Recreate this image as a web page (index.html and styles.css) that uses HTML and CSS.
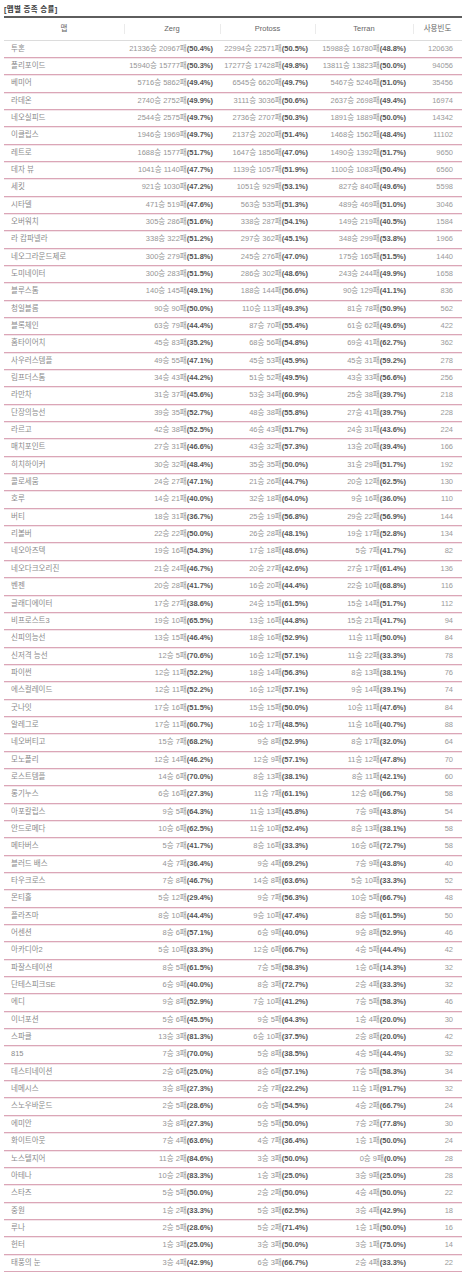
FILE: index.html
```html
<!DOCTYPE html>
<html lang="ko">
<head>
<meta charset="utf-8">
<title>맵별 종족 승률</title>
<link rel="stylesheet" href="styles.css">
</head>
<body>
<div class="wrap">
<div class="title">[맵별 종족 승률]</div>
<table class="stats">
<colgroup><col class="c-map"><col class="c-z"><col class="c-p"><col class="c-t"><col class="c-f"></colgroup>
<thead>
<tr><th>맵</th><th>Zerg</th><th>Protoss</th><th>Terran</th><th>사용빈도</th></tr>
</thead>
<tbody>
<tr><td class="map">투혼</td><td>21336승 20967패<b>(50.4%)</b></td><td>22994승 22571패<b>(50.5%)</b></td><td>15988승 16780패<b>(48.8%)</b></td><td class="f">120636</td></tr>
<tr><td class="map">폴리포이드</td><td>15940승 15777패<b>(50.3%)</b></td><td>17277승 17428패<b>(49.8%)</b></td><td>13811승 13823패<b>(50.0%)</b></td><td class="f">94056</td></tr>
<tr><td class="map">베미어</td><td>5716승 5862패<b>(49.4%)</b></td><td>6545승 6620패<b>(49.7%)</b></td><td>5467승 5246패<b>(51.0%)</b></td><td class="f">35456</td></tr>
<tr><td class="map">라데온</td><td>2740승 2752패<b>(49.9%)</b></td><td>3111승 3036패<b>(50.6%)</b></td><td>2637승 2698패<b>(49.4%)</b></td><td class="f">16974</td></tr>
<tr><td class="map">네오실피드</td><td>2544승 2575패<b>(49.7%)</b></td><td>2736승 2707패<b>(50.3%)</b></td><td>1891승 1889패<b>(50.0%)</b></td><td class="f">14342</td></tr>
<tr><td class="map">이클립스</td><td>1946승 1969패<b>(49.7%)</b></td><td>2137승 2020패<b>(51.4%)</b></td><td>1468승 1562패<b>(48.4%)</b></td><td class="f">11102</td></tr>
<tr><td class="map">레트로</td><td>1688승 1577패<b>(51.7%)</b></td><td>1647승 1856패<b>(47.0%)</b></td><td>1490승 1392패<b>(51.7%)</b></td><td class="f">9650</td></tr>
<tr><td class="map">데자 뷰</td><td>1041승 1140패<b>(47.7%)</b></td><td>1139승 1057패<b>(51.9%)</b></td><td>1100승 1083패<b>(50.4%)</b></td><td class="f">6560</td></tr>
<tr><td class="map">세킷</td><td>921승 1030패<b>(47.2%)</b></td><td>1051승 929패<b>(53.1%)</b></td><td>827승 840패<b>(49.6%)</b></td><td class="f">5598</td></tr>
<tr><td class="map">시타델</td><td>471승 519패<b>(47.6%)</b></td><td>563승 535패<b>(51.3%)</b></td><td>489승 469패<b>(51.0%)</b></td><td class="f">3046</td></tr>
<tr><td class="map">오버워치</td><td>305승 286패<b>(51.6%)</b></td><td>338승 287패<b>(54.1%)</b></td><td>149승 219패<b>(40.5%)</b></td><td class="f">1584</td></tr>
<tr><td class="map">라 캄파넬라</td><td>338승 322패<b>(51.2%)</b></td><td>297승 362패<b>(45.1%)</b></td><td>348승 299패<b>(53.8%)</b></td><td class="f">1966</td></tr>
<tr><td class="map">네오그라운드제로</td><td>300승 279패<b>(51.8%)</b></td><td>245승 276패<b>(47.0%)</b></td><td>175승 165패<b>(51.5%)</b></td><td class="f">1440</td></tr>
<tr><td class="map">도미네이터</td><td>300승 283패<b>(51.5%)</b></td><td>286승 302패<b>(48.6%)</b></td><td>243승 244패<b>(49.9%)</b></td><td class="f">1658</td></tr>
<tr><td class="map">블루스톰</td><td>140승 145패<b>(49.1%)</b></td><td>188승 144패<b>(56.6%)</b></td><td>90승 129패<b>(41.1%)</b></td><td class="f">836</td></tr>
<tr><td class="map">청일블롬</td><td>90승 90패<b>(50.0%)</b></td><td>110승 113패<b>(49.3%)</b></td><td>81승 78패<b>(50.9%)</b></td><td class="f">562</td></tr>
<tr><td class="map">블록체인</td><td>63승 79패<b>(44.4%)</b></td><td>87승 70패<b>(55.4%)</b></td><td>61승 62패<b>(49.6%)</b></td><td class="f">422</td></tr>
<tr><td class="map">홈타이어치</td><td>45승 83패<b>(35.2%)</b></td><td>68승 56패<b>(54.8%)</b></td><td>69승 41패<b>(62.7%)</b></td><td class="f">362</td></tr>
<tr><td class="map">사우러스템플</td><td>49승 55패<b>(47.1%)</b></td><td>45승 53패<b>(45.9%)</b></td><td>45승 31패<b>(59.2%)</b></td><td class="f">278</td></tr>
<tr><td class="map">림프더스톰</td><td>34승 43패<b>(44.2%)</b></td><td>51승 52패<b>(49.5%)</b></td><td>43승 33패<b>(56.6%)</b></td><td class="f">256</td></tr>
<tr><td class="map">라만차</td><td>31승 37패<b>(45.6%)</b></td><td>53승 34패<b>(60.9%)</b></td><td>25승 38패<b>(39.7%)</b></td><td class="f">218</td></tr>
<tr><td class="map">단장의능선</td><td>39승 35패<b>(52.7%)</b></td><td>48승 38패<b>(55.8%)</b></td><td>27승 41패<b>(39.7%)</b></td><td class="f">228</td></tr>
<tr><td class="map">라르고</td><td>42승 38패<b>(52.5%)</b></td><td>46승 43패<b>(51.7%)</b></td><td>24승 31패<b>(43.6%)</b></td><td class="f">224</td></tr>
<tr><td class="map">매치포인트</td><td>27승 31패<b>(46.6%)</b></td><td>43승 32패<b>(57.3%)</b></td><td>13승 20패<b>(39.4%)</b></td><td class="f">166</td></tr>
<tr><td class="map">히치하이커</td><td>30승 32패<b>(48.4%)</b></td><td>35승 35패<b>(50.0%)</b></td><td>31승 29패<b>(51.7%)</b></td><td class="f">192</td></tr>
<tr><td class="map">콜로세움</td><td>24승 27패<b>(47.1%)</b></td><td>21승 26패<b>(44.7%)</b></td><td>20승 12패<b>(62.5%)</b></td><td class="f">130</td></tr>
<tr><td class="map">호루</td><td>14승 21패<b>(40.0%)</b></td><td>32승 18패<b>(64.0%)</b></td><td>9승 16패<b>(36.0%)</b></td><td class="f">110</td></tr>
<tr><td class="map">버티</td><td>18승 31패<b>(36.7%)</b></td><td>25승 19패<b>(56.8%)</b></td><td>29승 22패<b>(56.9%)</b></td><td class="f">144</td></tr>
<tr><td class="map">리볼버</td><td>22승 22패<b>(50.0%)</b></td><td>26승 28패<b>(48.1%)</b></td><td>19승 17패<b>(52.8%)</b></td><td class="f">134</td></tr>
<tr><td class="map">네오아즈텍</td><td>19승 16패<b>(54.3%)</b></td><td>17승 18패<b>(48.6%)</b></td><td>5승 7패<b>(41.7%)</b></td><td class="f">82</td></tr>
<tr><td class="map">네오다크오리진</td><td>21승 24패<b>(46.7%)</b></td><td>20승 27패<b>(42.6%)</b></td><td>27승 17패<b>(61.4%)</b></td><td class="f">136</td></tr>
<tr><td class="map">벤젠</td><td>20승 28패<b>(41.7%)</b></td><td>16승 20패<b>(44.4%)</b></td><td>22승 10패<b>(68.8%)</b></td><td class="f">116</td></tr>
<tr><td class="map">글래디에이터</td><td>17승 27패<b>(38.6%)</b></td><td>24승 15패<b>(61.5%)</b></td><td>15승 14패<b>(51.7%)</b></td><td class="f">112</td></tr>
<tr><td class="map">비프로스트3</td><td>19승 10패<b>(65.5%)</b></td><td>13승 16패<b>(44.8%)</b></td><td>15승 21패<b>(41.7%)</b></td><td class="f">94</td></tr>
<tr><td class="map">신피의능선</td><td>13승 15패<b>(46.4%)</b></td><td>18승 16패<b>(52.9%)</b></td><td>11승 11패<b>(50.0%)</b></td><td class="f">84</td></tr>
<tr><td class="map">신저격 능선</td><td>12승 5패<b>(70.6%)</b></td><td>16승 12패<b>(57.1%)</b></td><td>11승 22패<b>(33.3%)</b></td><td class="f">78</td></tr>
<tr><td class="map">파이썬</td><td>12승 11패<b>(52.2%)</b></td><td>18승 14패<b>(56.3%)</b></td><td>8승 13패<b>(38.1%)</b></td><td class="f">76</td></tr>
<tr><td class="map">에스컬레이드</td><td>12승 11패<b>(52.2%)</b></td><td>16승 12패<b>(57.1%)</b></td><td>9승 14패<b>(39.1%)</b></td><td class="f">74</td></tr>
<tr><td class="map">굿나잇</td><td>17승 16패<b>(51.5%)</b></td><td>15승 15패<b>(50.0%)</b></td><td>10승 11패<b>(47.6%)</b></td><td class="f">84</td></tr>
<tr><td class="map">알레그로</td><td>17승 11패<b>(60.7%)</b></td><td>16승 17패<b>(48.5%)</b></td><td>11승 16패<b>(40.7%)</b></td><td class="f">88</td></tr>
<tr><td class="map">네오버티고</td><td>15승 7패<b>(68.2%)</b></td><td>9승 8패<b>(52.9%)</b></td><td>8승 17패<b>(32.0%)</b></td><td class="f">64</td></tr>
<tr><td class="map">모노폴리</td><td>12승 14패<b>(46.2%)</b></td><td>12승 9패<b>(57.1%)</b></td><td>11승 12패<b>(47.8%)</b></td><td class="f">70</td></tr>
<tr><td class="map">로스트템플</td><td>14승 6패<b>(70.0%)</b></td><td>8승 13패<b>(38.1%)</b></td><td>8승 11패<b>(42.1%)</b></td><td class="f">60</td></tr>
<tr><td class="map">롱기누스</td><td>6승 16패<b>(27.3%)</b></td><td>11승 7패<b>(61.1%)</b></td><td>12승 6패<b>(66.7%)</b></td><td class="f">58</td></tr>
<tr><td class="map">아포칼립스</td><td>9승 5패<b>(64.3%)</b></td><td>11승 13패<b>(45.8%)</b></td><td>7승 9패<b>(43.8%)</b></td><td class="f">54</td></tr>
<tr><td class="map">안드로메다</td><td>10승 6패<b>(62.5%)</b></td><td>11승 10패<b>(52.4%)</b></td><td>8승 13패<b>(38.1%)</b></td><td class="f">58</td></tr>
<tr><td class="map">메타버스</td><td>5승 7패<b>(41.7%)</b></td><td>8승 16패<b>(33.3%)</b></td><td>16승 6패<b>(72.7%)</b></td><td class="f">58</td></tr>
<tr><td class="map">블러드 배스</td><td>4승 7패<b>(36.4%)</b></td><td>9승 4패<b>(69.2%)</b></td><td>7승 9패<b>(43.8%)</b></td><td class="f">40</td></tr>
<tr><td class="map">타우크로스</td><td>7승 8패<b>(46.7%)</b></td><td>14승 8패<b>(63.6%)</b></td><td>5승 10패<b>(33.3%)</b></td><td class="f">52</td></tr>
<tr><td class="map">몬티홀</td><td>5승 12패<b>(29.4%)</b></td><td>9승 7패<b>(56.3%)</b></td><td>10승 5패<b>(66.7%)</b></td><td class="f">48</td></tr>
<tr><td class="map">플라즈마</td><td>8승 10패<b>(44.4%)</b></td><td>9승 10패<b>(47.4%)</b></td><td>8승 5패<b>(61.5%)</b></td><td class="f">50</td></tr>
<tr><td class="map">어센션</td><td>8승 6패<b>(57.1%)</b></td><td>6승 9패<b>(40.0%)</b></td><td>9승 8패<b>(52.9%)</b></td><td class="f">46</td></tr>
<tr><td class="map">아카디아2</td><td>5승 10패<b>(33.3%)</b></td><td>12승 6패<b>(66.7%)</b></td><td>4승 5패<b>(44.4%)</b></td><td class="f">42</td></tr>
<tr><td class="map">파잘스테이션</td><td>8승 5패<b>(61.5%)</b></td><td>7승 5패<b>(58.3%)</b></td><td>1승 6패<b>(14.3%)</b></td><td class="f">32</td></tr>
<tr><td class="map">단테스피크SE</td><td>6승 9패<b>(40.0%)</b></td><td>8승 3패<b>(72.7%)</b></td><td>2승 4패<b>(33.3%)</b></td><td class="f">32</td></tr>
<tr><td class="map">에디</td><td>9승 8패<b>(52.9%)</b></td><td>7승 10패<b>(41.2%)</b></td><td>7승 5패<b>(58.3%)</b></td><td class="f">46</td></tr>
<tr><td class="map">이너포션</td><td>5승 6패<b>(45.5%)</b></td><td>9승 5패<b>(64.3%)</b></td><td>1승 4패<b>(20.0%)</b></td><td class="f">30</td></tr>
<tr><td class="map">스파클</td><td>13승 3패<b>(81.3%)</b></td><td>6승 10패<b>(37.5%)</b></td><td>2승 8패<b>(20.0%)</b></td><td class="f">42</td></tr>
<tr><td class="map">815</td><td>7승 3패<b>(70.0%)</b></td><td>5승 8패<b>(38.5%)</b></td><td>4승 5패<b>(44.4%)</b></td><td class="f">32</td></tr>
<tr><td class="map">데스티네이션</td><td>2승 6패<b>(25.0%)</b></td><td>8승 6패<b>(57.1%)</b></td><td>7승 5패<b>(58.3%)</b></td><td class="f">34</td></tr>
<tr><td class="map">네메시스</td><td>3승 8패<b>(27.3%)</b></td><td>2승 7패<b>(22.2%)</b></td><td>11승 1패<b>(91.7%)</b></td><td class="f">32</td></tr>
<tr><td class="map">스노우바운드</td><td>2승 5패<b>(28.6%)</b></td><td>6승 5패<b>(54.5%)</b></td><td>4승 2패<b>(66.7%)</b></td><td class="f">24</td></tr>
<tr><td class="map">에미안</td><td>3승 8패<b>(27.3%)</b></td><td>5승 5패<b>(50.0%)</b></td><td>7승 2패<b>(77.8%)</b></td><td class="f">30</td></tr>
<tr><td class="map">화이트아웃</td><td>7승 4패<b>(63.6%)</b></td><td>4승 7패<b>(36.4%)</b></td><td>1승 1패<b>(50.0%)</b></td><td class="f">24</td></tr>
<tr><td class="map">노스텔지어</td><td>11승 2패<b>(84.6%)</b></td><td>3승 3패<b>(50.0%)</b></td><td>0승 9패<b>(0.0%)</b></td><td class="f">28</td></tr>
<tr><td class="map">아테나</td><td>10승 2패<b>(83.3%)</b></td><td>1승 3패<b>(25.0%)</b></td><td>3승 9패<b>(25.0%)</b></td><td class="f">28</td></tr>
<tr><td class="map">스타즈</td><td>5승 5패<b>(50.0%)</b></td><td>2승 2패<b>(50.0%)</b></td><td>4승 4패<b>(50.0%)</b></td><td class="f">22</td></tr>
<tr><td class="map">중원</td><td>1승 2패<b>(33.3%)</b></td><td>5승 3패<b>(62.5%)</b></td><td>3승 4패<b>(42.9%)</b></td><td class="f">18</td></tr>
<tr><td class="map">루나</td><td>2승 5패<b>(28.6%)</b></td><td>5승 2패<b>(71.4%)</b></td><td>1승 1패<b>(50.0%)</b></td><td class="f">16</td></tr>
<tr><td class="map">헌터</td><td>1승 3패<b>(25.0%)</b></td><td>3승 3패<b>(50.0%)</b></td><td>3승 1패<b>(75.0%)</b></td><td class="f">14</td></tr>
<tr><td class="map">태풍의 눈</td><td>3승 4패<b>(42.9%)</b></td><td>6승 3패<b>(66.7%)</b></td><td>2승 4패<b>(33.3%)</b></td><td class="f">22</td></tr>
</tbody>
</table>
</div>
</body>
</html>
```
FILE: styles.css
```css
html, body {
  margin: 0;
  padding: 0;
  background: #ffffff;
}

.wrap {
  padding: 0 0 0 4px;
  font-family: "Liberation Sans", "Noto Sans CJK KR", sans-serif;
  font-size: 7.5px;
  color: #909090;
}

.title {
  height: 16px;
  padding-top: 4px;
  box-sizing: border-box;
  line-height: 12px;
  font-size: 7.5px;
  font-weight: bold;
  color: #3a3a3a;
  letter-spacing: 0.3px;
}

.stats {
  width: 458px;
  table-layout: fixed;
  border-collapse: separate;
  border-spacing: 0;
  border-top: 2px solid #5e5e5e;
}

.c-map { width: 120px; }
.c-z { width: 96px; }
.c-p { width: 95px; }
.c-t { width: 98px; }
.c-f { width: 49px; }

.stats th {
  height: 21.5px;
  padding: 0;
  font-weight: normal;
  color: #666666;
  text-align: center;
  border-bottom: 1px solid #dcdcdc;
  line-height: 21.5px;
}

.stats th + th {
  background: linear-gradient(#ebebeb, #ebebeb) no-repeat left center / 1px 10px;
}

.stats td {
  padding: 0 7px 0 0;
  line-height: 16.35px;
  height: 16.35px;
  text-align: right;
  white-space: nowrap;
  color: #959595;
  border-bottom: 1px solid #dba6b7;
  background: linear-gradient(to bottom, #f4e5ea 1px, #ffffff 1px);
}

.stats tbody tr:first-child td {
  background: #ffffff;
}

.stats td.map {
  text-align: left;
  padding: 0 0 0 7px;
  color: #8c8c8c;
}

.stats td.f {
  padding-right: 9px;
  color: #9a9a9a;
}

.stats td b {
  font-weight: bold;
  color: #555555;
}
```
